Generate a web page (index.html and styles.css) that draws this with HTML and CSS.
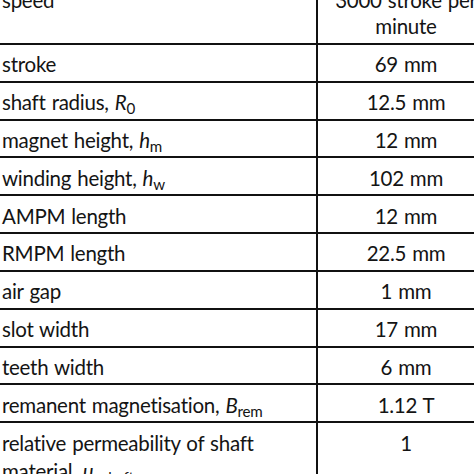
FILE: index.html
```html
<!DOCTYPE html>
<html>
<head>
<meta charset="utf-8">
<link rel="stylesheet" href="styles.css">
</head>
<body>
<div class="crop">
<table class="params">
  <colgroup><col class="c-name"><col class="c-val"></colgroup>
  <tbody>
    <tr class="head"><td>speed</td><td class="val">3000 stroke per<br>minute</td></tr>
    <tr><td>stroke</td><td class="val">69 mm</td></tr>
    <tr><td>shaft radius, <i>R</i><sub>0</sub></td><td class="val">12.5 mm</td></tr>
    <tr><td>magnet height, <i>h</i><sub>m</sub></td><td class="val">12 mm</td></tr>
    <tr><td>winding height, <i>h</i><sub>w</sub></td><td class="val">102 mm</td></tr>
    <tr><td>AMPM length</td><td class="val">12 mm</td></tr>
    <tr><td>RMPM length</td><td class="val">22.5 mm</td></tr>
    <tr><td>air gap</td><td class="val">1 mm</td></tr>
    <tr><td>slot width</td><td class="val">17 mm</td></tr>
    <tr><td>teeth width</td><td class="val">6 mm</td></tr>
    <tr><td>remanent magnetisation, <i>B</i><sub>rem</sub></td><td class="val">1.12 T</td></tr>
    <tr><td>relative permeability of shaft<br>material, <i>μ</i><sub>r,shaft</sub></td><td class="val">1</td></tr>
  </tbody>
</table>
</div>
</body>
</html>
```
FILE: styles.css
```css
html, body {
  margin: 0;
  padding: 0;
  background: #ffffff;
  width: 474px;
  height: 474px;
  overflow: hidden;
}

.crop {
  margin: -23px 0 0 -8px;
}

.params {
  border-collapse: collapse;
  table-layout: fixed;
  width: 502px;
  font-family: Lato, "Open Sans", sans-serif;
  font-size: 20.5px;
  line-height: 28px;
  letter-spacing: -0.25px;
  word-spacing: 1px;
  color: #141414;
}

.c-name { width: 324px; }
.c-val { width: 178px; }

.params td {
  border: 2px solid #111111;
  padding: 5.3px 6px 2.55px 8px;
  vertical-align: top;
  text-align: left;
  white-space: nowrap;
}

.params td.val {
  text-align: center;
  padding-left: 4px;
  padding-right: 4px;
}

.params .head td {
  line-height: 26px;
  padding-top: 8.3px;
  padding-bottom: 3.55px;
}

.params i {
  font-style: italic;
}

.params sub {
  font-size: 0.74em;
  line-height: 0;
  vertical-align: -0.28em;
}
```
